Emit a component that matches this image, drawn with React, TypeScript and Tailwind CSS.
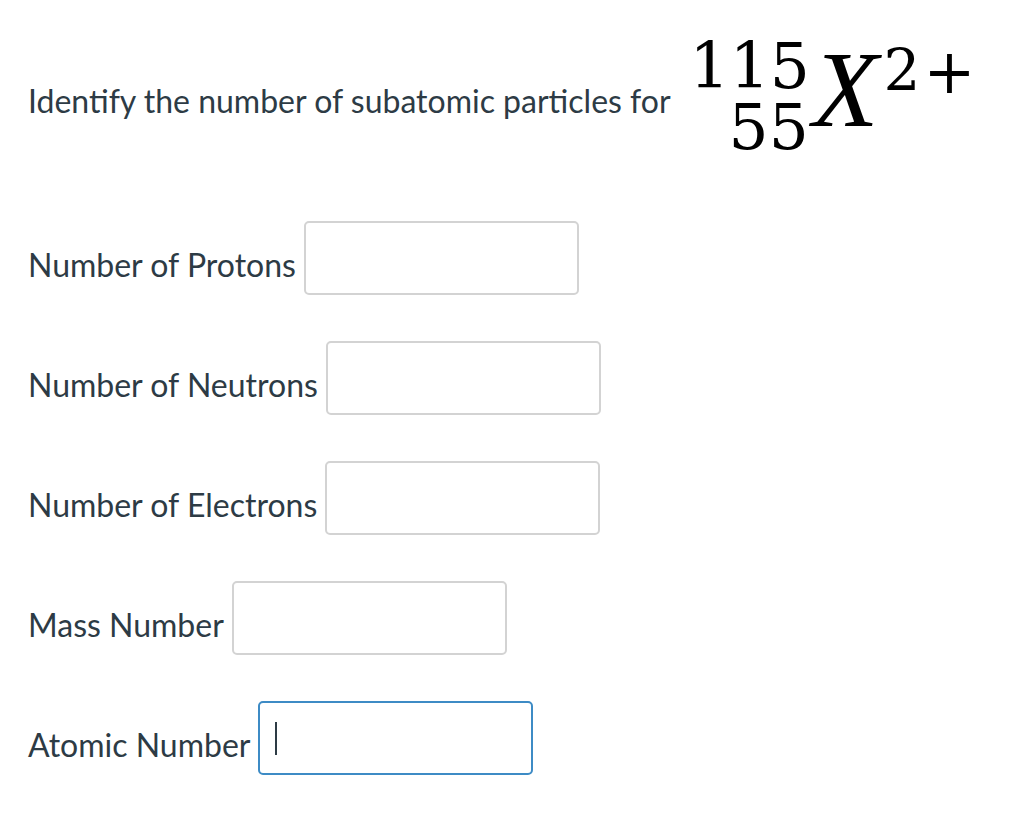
import React from "react";

function Formula() {
  return (
    <div className="relative w-[290px] h-[140px] shrink-0 font-['DejaVu_Serif',serif] text-black">
      <span className="absolute left-[-3px] top-[15px] text-[63px] leading-none">115</span>
      <span className="absolute left-[36px] top-[76px] text-[63px] leading-none">55</span>
      <span className="absolute left-[120px] top-[16px] text-[108px] leading-none italic font-['Liberation_Serif',serif]">X</span>
      <span className="absolute left-[191px] top-[21px] text-[58px] leading-none">2</span>
      <span className="absolute left-[231px] top-[21px] text-[62px] leading-none">+</span>
    </div>
  );
}

function Row({ label, focused }: { label: string; focused?: boolean }) {
  return (
    <div className="flex items-center h-[74px]">
      <span className="mt-[14px] whitespace-nowrap">{label}</span>
      <div
        className={
          focused
            ? "ml-[8px] w-[275px] h-[74px] rounded-[5px] border-2 border-[#3d8bc5] bg-white flex items-center pl-[15px]"
            : "ml-[8px] w-[275px] h-[74px] rounded-[5px] border-2 border-[#d3d3d3] bg-white"
        }
      >
        {focused ? <div className="w-[2px] h-[33px] bg-[#2d3b45]" /> : null}
      </div>
    </div>
  );
}

export default function App() {
  return (
    <div className="w-[1028px] h-[830px] bg-white font-['Lato',sans-serif] text-[#2d3b45] text-[32px] overflow-hidden">
      <div className="pl-[28px] pt-[20px]">
        <div className="flex items-center h-[140px]">
          <p className="mt-[22px] whitespace-nowrap">Identify the number of subatomic particles for</p>
          <div className="ml-[22px]">
            <Formula />
          </div>
        </div>
        <div className="mt-[61px] flex flex-col gap-[46px]">
          <Row label="Number of Protons" />
          <Row label="Number of Neutrons" />
          <Row label="Number of Electrons" />
          <Row label="Mass Number" />
          <Row label="Atomic Number" focused />
        </div>
      </div>
    </div>
  );
}
